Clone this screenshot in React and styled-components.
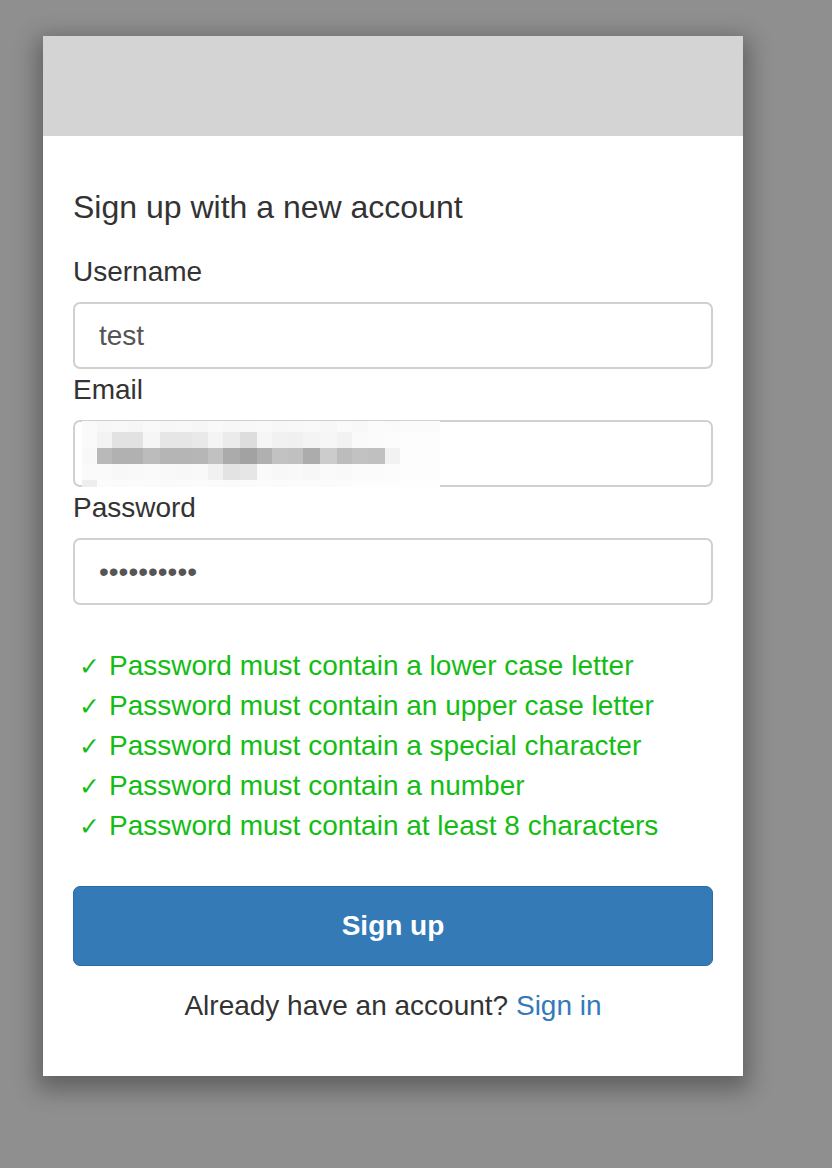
import React from "react";
import styled, { createGlobalStyle } from "styled-components";

const Global = createGlobalStyle`
  html, body { margin: 0; padding: 0; background: #8f8f8f; }
  body { font-family: "Liberation Sans", Arial, Helvetica, sans-serif; }
  * { box-sizing: border-box; }
`;

const Page = styled.div`
  min-height: 1168px;
  padding: 36px 0 0 43px;
`;

const Card = styled.div`
  width: 700px;
  background: #ffffff;
  box-shadow: 0 8px 22px 6px rgba(0, 0, 0, 0.32);
`;

const Banner = styled.div`
  height: 100px;
  background: #d4d4d4;
`;

const Body = styled.div`
  padding: 53px 30px 55px 30px;
  display: flex;
  flex-direction: column;
`;

const Title = styled.h1`
  margin: 0 0 32px 0;
  font-size: 32px;
  line-height: 36px;
  font-weight: 400;
  color: #333333;
`;

const Field = styled.div`
  display: flex;
  flex-direction: column;
  margin-bottom: 6px;
`;

const Label = styled.label`
  font-size: 28px;
  line-height: 30px;
  color: #333333;
  margin-bottom: 15px;
`;

const InputWrap = styled.div`
  position: relative;
`;

const Input = styled.input`
  width: 100%;
  height: 67px;
  border: 2px solid #d0d0d0;
  border-radius: 7px;
  padding: 0 24px;
  font-family: "Liberation Sans", Arial, sans-serif;
  font-size: 28px;
  color: #555555;
  background: #ffffff;
  outline: none;
`;

const Mosaic = styled.svg`
  position: absolute;
  left: 9px;
  top: 1px;
  pointer-events: none;
`;

const Rules = styled.ul`
  list-style: none;
  margin: 35px 0 40px 0;
  padding: 0 0 0 6px;
`;

const Rule = styled.li`
  display: flex;
  align-items: baseline;
  font-size: 28px;
  line-height: 40px;
  color: #13bd13;
`;

const Check = styled.span`
  width: 30px;
  flex: none;
  font-family: "DejaVu Sans", sans-serif;
  font-size: 25px;
  line-height: 1;
`;

const Button = styled.button`
  height: 80px;
  width: 100%;
  background: #337ab7;
  border: 1px solid #2e6da4;
  border-radius: 7px;
  color: #ffffff;
  font-family: "Liberation Sans", Arial, sans-serif;
  font-weight: 700;
  font-size: 28px;
  cursor: pointer;
`;

const Footer = styled.p`
  margin: 25px 0 0 0;
  text-align: center;
  font-size: 28px;
  line-height: 30px;
  color: #333333;
`;

const Link = styled.a`
  color: #337ab7;
  text-decoration: none;
`;

const cols = [0, 15, 30, 46, 61, 78, 95, 110, 126, 141, 158, 175, 190, 206, 221, 238, 255, 270, 286, 303, 318, 358];
const rows = [
  { y: 0, h: 11, c: ["#fafafa", "#f7f7f7", "#f8f8f8", "#f6f6f6", "#f9f9f9", "#f7f7f7", "#f8f8f8", "#f6f6f6", "#f9f9f9", "#f7f7f7", "#f8f8f8", "#f9f9f9", "#f7f7f7", "#f8f8f8", "#f9f9f9", "#f7f7f7", "#fafafa", "#f8f8f8", "#fbfbfb", "#fafafa", "#fbfbfb"] },
  { y: 11, h: 16, c: ["#fafafa", "#f3f3f3", "#e2e2e2", "#e2e2e2", "#f6f6f6", "#e6e6e6", "#e6e6e6", "#e9e9e9", "#f4f4f4", "#ebebeb", "#dddddd", "#f6f6f6", "#f1f1f1", "#f0f0f0", "#f4f4f4", "#f6f6f6", "#f2f2f2", "#fafafa", "#fbfbfb", "#fcfcfc", "#fdfdfd"] },
  { y: 27, h: 16, c: ["#f8f8f8", "#b9b9b9", "#b1b1b1", "#b1b1b1", "#bcbcbc", "#b5b5b5", "#b5b5b5", "#b6b6b6", "#c1c1c1", "#ababab", "#a2a2a2", "#b0b0b0", "#c2c2c2", "#c0c0c0", "#acacac", "#cccccc", "#bcbcbc", "#c2c2c2", "#c0c0c0", "#f2f2f2", "#fdfdfd"] },
  { y: 43, h: 16, c: ["#fafafa", "#fafafa", "#f8f8f8", "#f9f9f9", "#fafafa", "#f9f9f9", "#f8f8f8", "#f9f9f9", "#f1f1f1", "#e3e3e3", "#e6e6e6", "#fafafa", "#f8f8f8", "#f9f9f9", "#f7f7f7", "#fafafa", "#f9f9f9", "#fbfbfb", "#fbfbfb", "#fcfcfc", "#fdfdfd"] },
  { y: 59, h: 7, c: ["#eeeeee", "#fcfcfc", "#fbfbfb", "#fcfcfc", "#fbfbfb", "#fafafa", "#fbfbfb", "#fcfcfc", "#fbfbfb", "#fafafa", "#fbfbfb", "#fcfcfc", "#fbfbfb", "#fcfcfc", "#fcfcfc", "#fbfbfb", "#fcfcfc", "#fdfdfd", "#fdfdfd", "#fdfdfd", "#fefefe"] },
];

function EmailMosaic() {
  return (
    <Mosaic width="358" height="66" viewBox="0 0 358 66">
      {rows.map((r, ri) =>
        r.c.map((col, ci) => (
          <rect
            key={`${ri}-${ci}`}
            x={cols[ci]}
            y={r.y}
            width={cols[ci + 1] - cols[ci]}
            height={r.h}
            fill={col}
          />
        ))
      )}
    </Mosaic>
  );
}

const rules = [
  "Password must contain a lower case letter",
  "Password must contain an upper case letter",
  "Password must contain a special character",
  "Password must contain a number",
  "Password must contain at least 8 characters",
];

export default function App() {
  return (
    <>
      <Global />
      <Page>
        <Card>
          <Banner />
          <Body>
            <Title>Sign up with a new account</Title>
            <Field>
              <Label>Username</Label>
              <InputWrap>
                <Input type="text" defaultValue="test" readOnly />
              </InputWrap>
            </Field>
            <Field>
              <Label>Email</Label>
              <InputWrap>
                <Input type="email" defaultValue="" readOnly />
                <EmailMosaic />
              </InputWrap>
            </Field>
            <Field>
              <Label>Password</Label>
              <InputWrap>
                <Input type="password" defaultValue="abcdefghij" readOnly />
              </InputWrap>
            </Field>
            <Rules>
              {rules.map((r) => (
                <Rule key={r}>
                  <Check>✓</Check>
                  <span>{r}</span>
                </Rule>
              ))}
            </Rules>
            <Button type="button">Sign up</Button>
            <Footer>
              Already have an account? <Link href="#">Sign in</Link>
            </Footer>
          </Body>
        </Card>
      </Page>
    </>
  );
}
